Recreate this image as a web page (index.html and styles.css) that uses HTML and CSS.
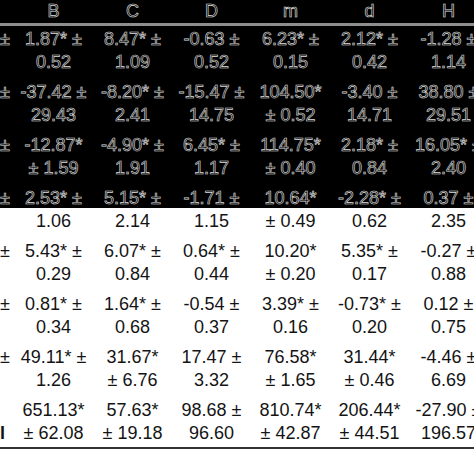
FILE: index.html
```html
<!DOCTYPE html>
<html>
<head>
<meta charset="utf-8">
<link rel="stylesheet" href="styles.css">
</head>
<body>
<div class="table">
  <div class="row head inv">
    <div class="c0"></div>
    <div class="c">B</div><div class="c">C</div><div class="c">D</div><div class="c">m</div><div class="c">d</div><div class="c">H</div>
  </div>
  <div class="row inv">
    <div class="c0">±<br>&nbsp;</div>
    <div class="c">1.87* ±<br>0.52</div>
    <div class="c">8.47* ±<br>1.09</div>
    <div class="c">-0.63 ±<br>0.52</div>
    <div class="c">6.23* ±<br>0.15</div>
    <div class="c">2.12* ±<br>0.42</div>
    <div class="c">-1.28 ±<br>1.14</div>
  </div>
  <div class="row inv">
    <div class="c0">±<br>&nbsp;</div>
    <div class="c">-37.42 ±<br>29.43</div>
    <div class="c">-8.20* ±<br>2.41</div>
    <div class="c">-15.47 ±<br>14.75</div>
    <div class="c">104.50*<br>± 0.52</div>
    <div class="c">-3.40 ±<br>14.71</div>
    <div class="c">38.80 ±<br>29.51</div>
  </div>
  <div class="row inv">
    <div class="c0">±<br>&nbsp;</div>
    <div class="c">-12.87*<br>± 1.59</div>
    <div class="c">-4.90* ±<br>1.91</div>
    <div class="c">6.45* ±<br>1.17</div>
    <div class="c">114.75*<br>± 0.40</div>
    <div class="c">2.18* ±<br>0.84</div>
    <div class="c">16.05* ±<br>2.40</div>
  </div>
  <div class="row">
    <div class="c0"><span class="inv">±</span><br>&nbsp;</div>
    <div class="c"><span class="inv">2.53* ±</span><br>1.06</div>
    <div class="c"><span class="inv">5.15* ±</span><br>2.14</div>
    <div class="c"><span class="inv">-1.71 ±</span><br>1.15</div>
    <div class="c"><span class="inv">10.64*</span><br>± 0.49</div>
    <div class="c"><span class="inv">-2.28* ±</span><br>0.62</div>
    <div class="c"><span class="inv">0.37 ±</span><br>2.35</div>
  </div>
  <div class="row">
    <div class="c0">±<br>&nbsp;</div>
    <div class="c">5.43* ±<br>0.29</div>
    <div class="c">6.07* ±<br>0.84</div>
    <div class="c">0.64* ±<br>0.44</div>
    <div class="c">10.20*<br>± 0.20</div>
    <div class="c">5.35* ±<br>0.17</div>
    <div class="c">-0.27 ±<br>0.88</div>
  </div>
  <div class="row">
    <div class="c0">±<br>&nbsp;</div>
    <div class="c">0.81* ±<br>0.34</div>
    <div class="c">1.64* ±<br>0.68</div>
    <div class="c">-0.54 ±<br>0.37</div>
    <div class="c">3.39* ±<br>0.16</div>
    <div class="c">-0.73* ±<br>0.20</div>
    <div class="c">0.12 ±<br>0.75</div>
  </div>
  <div class="row">
    <div class="c0">±<br>&nbsp;</div>
    <div class="c">49.11* ±<br>1.26</div>
    <div class="c">31.67*<br>± 6.76</div>
    <div class="c">17.47 ±<br>3.32</div>
    <div class="c">76.58*<br>± 1.65</div>
    <div class="c">31.44*<br>± 0.46</div>
    <div class="c">-4.46 ±<br>6.69</div>
  </div>
  <div class="row last">
    <div class="c0">&nbsp;<br><span class="mark">l</span></div>
    <div class="c">651.13*<br>± 62.08</div>
    <div class="c">57.63*<br>± 19.18</div>
    <div class="c">98.68 ±<br>96.60</div>
    <div class="c">810.74*<br>± 42.87</div>
    <div class="c">206.44*<br>± 44.51</div>
    <div class="c">-27.90 ±<br>196.57</div>
  </div>
</div>
</body>
</html>
```

FILE: styles.css
```css
html, body {
  margin: 0;
  padding: 0;
  background: #fff;
  overflow: hidden;
  width: 474px;
  height: 474px;
}
.table {
  width: 474px;
  overflow: hidden;
  font-family: "Liberation Sans", Arial, sans-serif;
  font-size: 18px;
  line-height: 23px;
  color: #141414;
  background: linear-gradient(to bottom, #000 0, #000 208px, #fff 208px);
  border-bottom: 2px solid #333;
}
.row {
  display: grid;
  grid-template-columns: 14px repeat(6, 79px);
  padding: 2px 0 5px 0;
  white-space: nowrap;
}
.row.last {
  padding-bottom: 2px;
}
.row.head {
  padding: 0;
  height: 23px;
  border-bottom: 3px solid #8e8e8e;
}
.c {
  text-align: center;
}
.c0 {
  text-align: right;
  padding-right: 6px;
}
.inv {
  color: #000;
  -webkit-text-stroke: 0.6px #e0e0e0;
}
.mark {
  font-weight: bold;
  margin-right: 4px;
  color: #111;
}
```
